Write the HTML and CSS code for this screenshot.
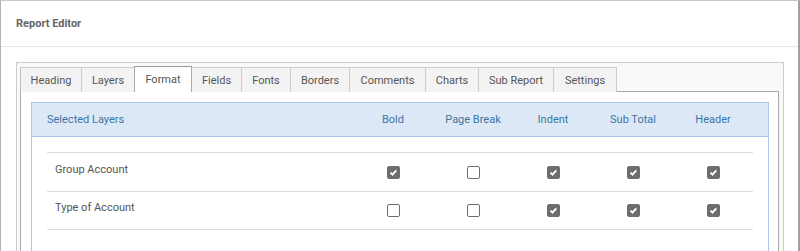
FILE: index.html
```html
<!DOCTYPE html>
<html>
<head>
<meta charset="utf-8">
<link rel="stylesheet" href="styles.css">
</head>
<body>
<div class="dialog">
  <div class="dlg-header">Report Editor</div>
  <div class="dlg-body">
    <div class="panel">
      <div class="tabs">
        <div class="tab">Heading</div>
        <div class="tab">Layers</div>
        <div class="tab active">Format</div>
        <div class="tab">Fields</div>
        <div class="tab">Fonts</div>
        <div class="tab">Borders</div>
        <div class="tab">Comments</div>
        <div class="tab">Charts</div>
        <div class="tab">Sub Report</div>
        <div class="tab">Settings</div>
      </div>
      <div class="tab-content">
        <div class="grid-box">
          <div class="grid-head">
            <div class="c-name">Selected Layers</div>
            <div class="c">Bold</div>
            <div class="c">Page Break</div>
            <div class="c">Indent</div>
            <div class="c">Sub Total</div>
            <div class="c">Header</div>
          </div>
          <div class="rows">
            <div class="row">
              <div class="c-name">Group Account</div>
              <div class="c"><span class="cb on"><svg viewBox="0 0 13 13"><path d="M3 6.6 L5.3 8.9 L9.8 4" fill="none" stroke="#fff" stroke-width="2.2"/></svg></span></div>
              <div class="c"><span class="cb"></span></div>
              <div class="c"><span class="cb on"><svg viewBox="0 0 13 13"><path d="M3 6.6 L5.3 8.9 L9.8 4" fill="none" stroke="#fff" stroke-width="2.2"/></svg></span></div>
              <div class="c"><span class="cb on"><svg viewBox="0 0 13 13"><path d="M3 6.6 L5.3 8.9 L9.8 4" fill="none" stroke="#fff" stroke-width="2.2"/></svg></span></div>
              <div class="c"><span class="cb on"><svg viewBox="0 0 13 13"><path d="M3 6.6 L5.3 8.9 L9.8 4" fill="none" stroke="#fff" stroke-width="2.2"/></svg></span></div>
            </div>
            <div class="row">
              <div class="c-name">Type of Account</div>
              <div class="c"><span class="cb"></span></div>
              <div class="c"><span class="cb"></span></div>
              <div class="c"><span class="cb on"><svg viewBox="0 0 13 13"><path d="M3 6.6 L5.3 8.9 L9.8 4" fill="none" stroke="#fff" stroke-width="2.2"/></svg></span></div>
              <div class="c"><span class="cb on"><svg viewBox="0 0 13 13"><path d="M3 6.6 L5.3 8.9 L9.8 4" fill="none" stroke="#fff" stroke-width="2.2"/></svg></span></div>
              <div class="c"><span class="cb on"><svg viewBox="0 0 13 13"><path d="M3 6.6 L5.3 8.9 L9.8 4" fill="none" stroke="#fff" stroke-width="2.2"/></svg></span></div>
            </div>
          </div>
        </div>
      </div>
    </div>
  </div>
</div>
</body>
</html>
```
FILE: styles.css
```css
html, body {
  margin: 0;
  padding: 0;
  background: #fff;
  height: 251px;
  overflow: hidden;
}
body {
  font-family: Roboto, "Liberation Sans", sans-serif;
  font-size: 11px;
  color: #555;
}
.dialog {
  box-sizing: border-box;
  width: 800px;
  height: 251px;
  overflow: hidden;
  border-top: 1px solid #c8c8c8;
  border-left: 1px solid #b5b5b5;
  border-right: 2px solid #a0a0a0;
  background: #fff;
}
.dlg-header {
  height: 46px;
  box-sizing: border-box;
  padding-left: 15px;
  display: flex;
  align-items: center;
  font-size: 11px;
  font-weight: bold;
  color: #666;
  border-bottom: 1px solid #e6e6e6;
}
.dlg-body {
  padding: 15px 14px 0 15px;
}
.panel {
  border: 1px solid #ccc;
  border-bottom: none;
  background: #f9f9f9;
  padding: 3px 4px 0 3px;
  height: 186px;
}
.tabs {
  display: flex;
  height: 25px;
  position: relative;
  z-index: 1;
}
.tab {
  box-sizing: border-box;
  height: 25px;
  padding: 0;
  border: 1px solid #ccc;
  border-bottom: none;
  border-left: none;
  background: #f3f3f3;
  display: flex;
  align-items: center;
  justify-content: center;
  color: #555;
  margin-top: 1px;
}
.tab:first-child {
  border-left: 1px solid #bbb;
}
.tab:nth-child(1) { width: 62px; }
.tab:nth-child(2) { width: 53px; }
.tab:nth-child(4) { width: 50px; }
.tab:nth-child(5) { width: 49px; }
.tab:nth-child(6) { width: 59px; }
.tab:nth-child(7) { width: 76px; }
.tab:nth-child(8) { width: 53px; }
.tab:nth-child(9) { width: 75px; }
.tab:nth-child(10) { width: 63px; }
.tab.active {
  background: #fff;
  border-top: 1px solid #999;
  border-left: 1px solid #aaa;
  border-right: 1px solid #aaa;
  margin-top: 0;
  height: 26px;
  margin-left: -1px;
  width: 58px;
}
.tab-content {
  border: 1px solid #aaa;
  border-bottom: none;
  background: #fff;
  padding: 10px 9px 0 10px;
  height: 160px;
}
.grid-box {
  border: 1px solid #a9c5e8;
  border-bottom: none;
  height: 150px;
}
.grid-head, .row {
  display: grid;
  grid-template-columns: 1fr repeat(5, 80px);
  align-items: center;
}
.grid-head {
  background: #dde8f6;
  height: 33px;
  border-bottom: 1px solid #a9c5e8;
  padding: 0 15px;
  color: #3c76a3;
}
.grid-head .c {
  text-align: center;
}
.rows {
  margin: 15px 15px 0 15px;
  border-top: 1px solid #dcdcdc;
}
.row {
  height: 38px;
  border-bottom: 1px solid #dcdcdc;
}
.row:nth-child(2) {
  height: 37px;
}
.row .c-name {
  padding-left: 8px;
  padding-bottom: 6px;
  color: #555;
}
.row .c {
  display: flex;
  justify-content: center;
}
.cb {
  box-sizing: border-box;
  width: 13px;
  height: 13px;
  border: 1px solid #6e6e6e;
  border-radius: 2px;
  background: #fff;
  display: block;
}
.cb.on {
  background: #6e6e6e;
}
.cb svg {
  display: block;
  width: 11px;
  height: 11px;
}
```
